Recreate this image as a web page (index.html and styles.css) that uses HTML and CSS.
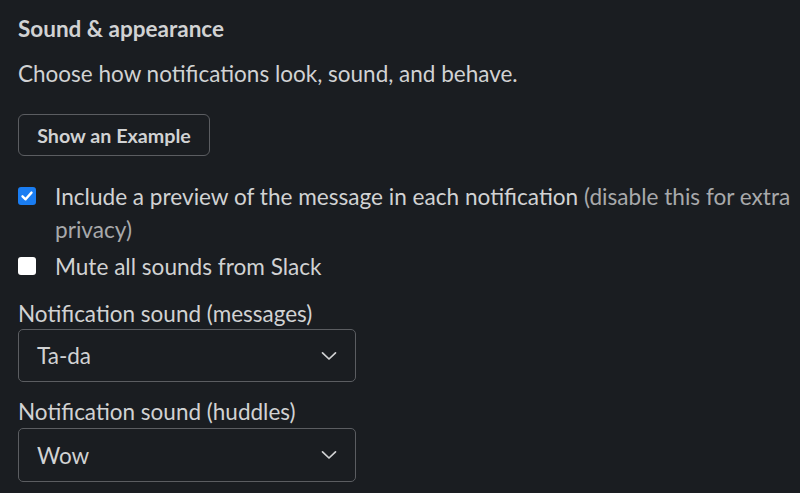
FILE: index.html
```html
<!DOCTYPE html>
<html>
<head>
<meta charset="utf-8">
<link rel="stylesheet" href="styles.css">
</head>
<body>
<div class="page">
  <h2 class="title">Sound &amp; appearance</h2>
  <p class="desc">Choose how notifications look, sound, and behave.</p>
  <button class="btn">Show an Example</button>
  <div class="checks">
    <label class="check">
      <span class="box checked"><svg viewBox="0 0 18 18" width="18" height="18"><path d="M4.5 9.3 L7.6 12.3 L13.5 5.6" fill="none" stroke="#fff" stroke-width="2.4" stroke-linecap="round" stroke-linejoin="round"/></svg></span>
      <span class="check-text">Include a preview of the message in each notification <span class="muted">(disable this for extra privacy)</span></span>
    </label>
    <label class="check">
      <span class="box"></span>
      <span class="check-text">Mute all sounds from Slack</span>
    </label>
  </div>
  <div class="field first">
    <div class="field-label">Notification sound (messages)</div>
    <div class="select"><span>Ta-da</span><svg class="chev" viewBox="0 0 16 10" width="16" height="10"><path d="M1.5 1.8 L8 8 L14.5 1.8" fill="none" stroke="#d1d2d3" stroke-width="1.7" stroke-linecap="round" stroke-linejoin="round"/></svg></div>
  </div>
  <div class="field">
    <div class="field-label">Notification sound (huddles)</div>
    <div class="select tall"><span>Wow</span><svg class="chev" viewBox="0 0 16 10" width="16" height="10"><path d="M1.5 1.8 L8 8 L14.5 1.8" fill="none" stroke="#d1d2d3" stroke-width="1.7" stroke-linecap="round" stroke-linejoin="round"/></svg></div>
  </div>
</div>
</body>
</html>
```

FILE: styles.css
```css
html, body {
  margin: 0;
  padding: 0;
  background: #1a1d21;
}
body {
  font-family: Lato, "Noto Sans", "Liberation Sans", sans-serif;
  color: #d1d2d3;
  width: 800px;
  height: 493px;
  overflow: hidden;
}
.page {
  padding: 15px 4px 0 18px;
  display: flex;
  flex-direction: column;
  align-items: flex-start;
}
.title {
  margin: 0;
  font-size: 22.5px;
  font-weight: 700;
  line-height: 28px;
  color: #d1d2d3;
}
.desc {
  margin: 17px 0 0;
  font-size: 22.5px;
  line-height: 28px;
}
.btn {
  margin-top: 26px;
  height: 42px;
  width: 192px;
  padding: 0;
  background: transparent;
  border: 1px solid #5b5d61;
  border-radius: 6px;
  color: #d1d2d3;
  font-family: inherit;
  font-size: 19.7px;
  font-weight: 700;
}
.checks {
  margin-top: 24px;
  display: flex;
  flex-direction: column;
  gap: 4px;
}
.check {
  display: flex;
  align-items: flex-start;
  gap: 19px;
  font-size: 22.6px;
  line-height: 33px;
}
.box {
  flex: none;
  width: 18px;
  height: 18px;
  margin-top: 7px;
  border-radius: 3px;
  background: #ffffff;
  box-sizing: border-box;
  display: flex;
}
.box.checked {
  background: #1a7df2;
}
.muted {
  color: #a8a9ab;
}
.field {
  margin-top: 17px;
  display: flex;
  flex-direction: column;
  align-items: flex-start;
}
.field + .field {
  margin-top: 16px;
}
.field-label {
  font-size: 22.5px;
  line-height: 28px;
}
.select {
  margin-top: 1px;
  width: 338px;
  height: 53px;
  box-sizing: border-box;
  border: 1px solid #5b5d61;
  border-radius: 5px;
  display: flex;
  align-items: center;
  justify-content: space-between;
  padding: 0 18px 0 18px;
  font-size: 22.5px;
}
.select.tall {
  margin-top: 2px;
  height: 54px;
}
.chev {
  display: block;
}
```
